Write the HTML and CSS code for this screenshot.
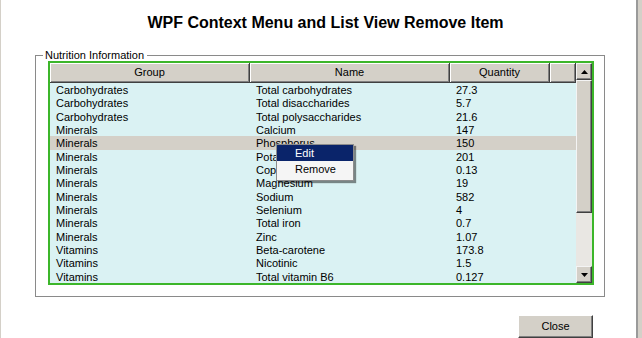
FILE: index.html
```html
<!DOCTYPE html>
<html lang="en">
<head>
    <meta charset="UTF-8">
    <title>WPF Context Menu and List View Remove Item</title>
    <link rel="stylesheet" href="styles.css">
</head>
<body>
    <div class="window">
        <h1 class="title">WPF Context Menu and List View Remove Item</h1>

        <fieldset class="group">
            <legend>Nutrition Information</legend>
            <div class="listview">
                <div class="grid">
                    <div class="row header">
                        <div class="col-head">Group</div>
                        <div class="col-head">Name</div>
                        <div class="col-head">Quantity</div>
                        <div class="col-head"></div>
                    </div>
                    <div class="rows">
                        <div class="row"><span>Carbohydrates</span><span>Total carbohydrates</span><span>27.3</span></div>
                        <div class="row"><span>Carbohydrates</span><span>Total disaccharides</span><span>5.7</span></div>
                        <div class="row"><span>Carbohydrates</span><span>Total polysaccharides</span><span>21.6</span></div>
                        <div class="row"><span>Minerals</span><span>Calcium</span><span>147</span></div>
                        <div class="row selected"><span>Minerals</span><span>Phosphorus</span><span>150</span></div>
                        <div class="row"><span>Minerals</span><span>Potassium</span><span>201</span></div>
                        <div class="row"><span>Minerals</span><span>Copper</span><span>0.13</span></div>
                        <div class="row"><span>Minerals</span><span>Magnesium</span><span>19</span></div>
                        <div class="row"><span>Minerals</span><span>Sodium</span><span>582</span></div>
                        <div class="row"><span>Minerals</span><span>Selenium</span><span>4</span></div>
                        <div class="row"><span>Minerals</span><span>Total iron</span><span>0.7</span></div>
                        <div class="row"><span>Minerals</span><span>Zinc</span><span>1.07</span></div>
                        <div class="row"><span>Vitamins</span><span>Beta-carotene</span><span>173.8</span></div>
                        <div class="row"><span>Vitamins</span><span>Nicotinic</span><span>1.5</span></div>
                        <div class="row"><span>Vitamins</span><span>Total vitamin B6</span><span>0.127</span></div>
                    </div>
                </div>
                <div class="scrollbar">
                    <div class="sb-btn">
                        <svg width="7" height="4" viewBox="0 0 7 4"><polygon points="3.5,0 7,4 0,4" fill="#000"/></svg>
                    </div>
                    <div class="sb-thumb"></div>
                    <div class="sb-track"></div>
                    <div class="sb-btn">
                        <svg width="7" height="4" viewBox="0 0 7 4"><polygon points="0,0 7,0 3.5,4" fill="#000"/></svg>
                    </div>
                </div>
            </div>
        </fieldset>

        <div class="footer">
            <button class="btn">Close</button>
        </div>

        <!-- context menu opened on the selected row -->
        <div class="context-menu">
            <div class="menu-item active">Edit</div>
            <div class="menu-item">Remove</div>
        </div>
    </div>
</body>
</html>
```

FILE: styles.css
```css
:root {
    --face: #d4d0c8;
    --shadow: #808080;
    --dark: #404040;
    --row-bg: #daf2f3;
    --green: #3cb62a;
    --navy: #0a246a;
}

* {
    box-sizing: border-box;
    margin: 0;
    padding: 0;
}

body {
    font-family: 'Liberation Sans', Arial, sans-serif;
    font-size: 11px;
    color: #000;
    background: #fff;
    width: 642px;
    height: 338px;
    overflow: hidden;
}

.window {
    position: relative;
    height: 338px;
    border-left: 1px solid var(--face);
    border-right: 4px solid var(--face);
    box-shadow: inset -2px 0 0 #9a9a9a;
    background: #fff;
}

.title {
    padding: 13px 0 0 12px;
    line-height: 20px;
    font-size: 16px;
    font-weight: bold;
    text-align: center;
}

.group {
    margin: 16px 0 0 34px;
    width: 570px;
    border: 1px solid #8a8a8a;
    padding: 0 10px 11px 12px;
}

.group legend {
    margin-left: -5px;
    padding: 0 3px 0 2px;
    line-height: 12px;
}

.listview {
    display: flex;
    width: 546px;
    border: 2px solid var(--green);
    background: var(--row-bg);
}

.grid {
    width: 526px;
}

.row {
    display: grid;
    grid-template-columns: 200px 200px 100px 26px;
}

.row span {
    padding: 1px 0 0 6px;
    line-height: 12.33px;
    white-space: nowrap;
    overflow: hidden;
}

.header {
    height: 20px;
    background: var(--face);
}

.col-head {
    text-align: center;
    line-height: 19px;
    border-right: 1px solid var(--dark);
    border-bottom: 1px solid var(--dark);
    box-shadow: inset 1px 1px 0 #fff, inset -1px -1px 0 var(--shadow);
}

.rows {
    display: grid;
    grid-template-rows: repeat(15, minmax(0, 1fr));
    height: 200px;
}

.rows .selected {
    background: var(--face);
}

.scrollbar {
    display: flex;
    flex-direction: column;
    width: 16px;
    background: #e9e7e3;
}

.sb-btn,
.sb-thumb {
    background: var(--face);
    border: 1px solid;
    border-color: #f4f4f4 var(--dark) var(--dark) #f4f4f4;
    box-shadow: inset -1px -1px 0 var(--shadow);
}

.sb-btn {
    height: 17px;
    display: flex;
    align-items: center;
    justify-content: center;
}

.sb-btn svg {
    display: block;
}

.sb-thumb {
    height: 133px;
}

.sb-track {
    flex: 1;
}

.footer {
    display: flex;
    justify-content: flex-end;
    padding: 18px 45px 0 0;
}

.btn {
    width: 75px;
    height: 23px;
    padding-bottom: 1px;
    font-family: inherit;
    font-size: 11px;
    color: #000;
    background: var(--face);
    border: 1px solid;
    border-color: #fff var(--dark) var(--dark) #fff;
    box-shadow: inset -1px -1px 0 var(--shadow);
}

.context-menu {
    position: absolute;
    left: 275px;
    top: 144px;
    width: 78px;
    padding-bottom: 3px;
    background: #f5f5f5;
    border: 1px solid #8c8c8c;
    box-shadow: 2px 2px 1px rgba(0, 0, 0, 0.45);
}

.menu-item {
    height: 16px;
    line-height: 16px;
    padding-left: 18px;
}

.menu-item.active {
    background: var(--navy);
    color: #fff;
}
```
